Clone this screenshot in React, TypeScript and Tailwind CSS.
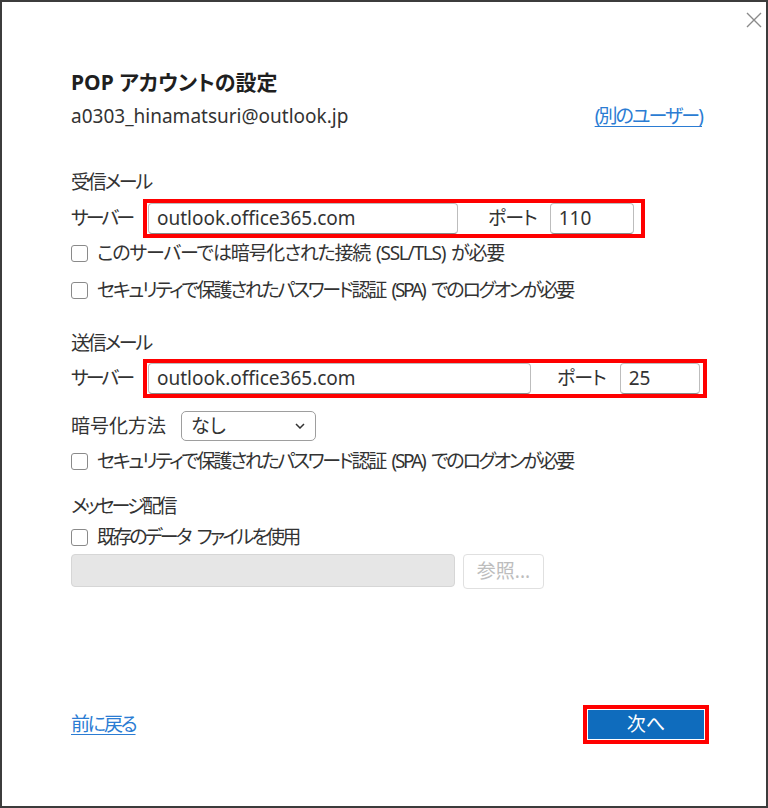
import React from "react";

function Checkbox({ label, track }: { label: string; track: string }) {
  return (
    <div className="flex items-center h-[26px]">
      <div className="w-[17px] h-[17px] border border-[#8a8a8a] rounded-[3px] bg-white shrink-0" />
      <span className={`ml-[9px] text-[19px] text-[#333333] whitespace-nowrap ${track}`}>{label}</span>
    </div>
  );
}

function ServerRow({
  boxW,
  inputW,
  labelGap,
  portX,
  portW,
  portVal,
}: {
  boxW: string;
  inputW: string;
  labelGap: string;
  portX: string;
  portW: string;
  portVal: string;
}) {
  return (
    <div className="flex items-center h-[39px]">
      <span className="w-[72px] text-[19px] tracking-[-3px] text-[#333333] whitespace-nowrap">サーバー</span>
      <div className={`flex items-center h-[39px] border-4 border-[#ff0000] pl-[1px] ${boxW}`}>
        <div className={`h-[31px] border border-[#bdbdbd] border-b-[#8a8a8a] rounded-[4px] bg-white flex items-center pl-[8px] text-[19px] text-[#333333] ${inputW}`}>
          outlook.office365.com
        </div>
        <span className={`text-[19px] tracking-[-1px] text-[#333333] whitespace-nowrap ${labelGap}`}>ポート</span>
        <div className={`h-[31px] border border-[#bdbdbd] border-b-[#8a8a8a] rounded-[4px] bg-white flex items-center pl-[8px] text-[19px] text-[#333333] ${portX} ${portW}`}>
          {portVal}
        </div>
      </div>
    </div>
  );
}

export default function App() {
  return (
    <div className="relative w-[768px] h-[808px] bg-white border-2 border-[#3c3c3c] overflow-hidden font-['Noto_Sans','Noto_Sans_CJK_JP',sans-serif] [font-feature-settings:'palt']">
      <svg className="absolute left-[743px] top-[9px]" width="18" height="18" viewBox="0 0 18 18">
        <path d="M2 2 L16 16 M16 2 L2 16" stroke="#8a8a8a" strokeWidth="1.4" fill="none" />
      </svg>
      <div className="pl-[69px] pt-[66px]">
        <div className="h-[30px] flex items-center text-[21px] font-bold text-[#1f1f1f]">POP アカウントの設定</div>
        <div className="mt-[3px] h-[30px] flex items-center justify-between w-[631px]">
          <span className="text-[19px] text-[#333333]">a0303_hinamatsuri@outlook.jp</span>
          <span className="text-[19px] tracking-[-1.9px] text-[#2b7cd3] underline underline-offset-[3px]">(別のユーザー)</span>
        </div>

        <div className="mt-[36px] h-[30px] flex items-center text-[19px] tracking-[-2.2px] text-[#333333]">受信メール</div>
        <div className="mt-[2px]">
          <ServerRow
            boxW="w-[502px]"
            inputW="w-[310px]"
            labelGap="ml-[30px]"
            portX="ml-[13px]"
            portW="w-[84px]"
            portVal="110"
          />
        </div>
        <div className="mt-[2px]">
          <Checkbox track="tracking-[-1.2px] [word-spacing:2px]" label="このサーバーでは暗号化された接続 (SSL/TLS) が必要" />
        </div>
        <div className="mt-[11px]">
          <Checkbox track="tracking-[-2.3px] [word-spacing:4px]" label="セキュリティで保護されたパスワード認証 (SPA) でのログオンが必要" />
        </div>

        <div className="mt-[25px] h-[30px] flex items-center text-[19px] tracking-[-2.2px] text-[#333333]">送信メール</div>
        <div className="mt-[1px]">
          <ServerRow
            boxW="w-[564px]"
            inputW="w-[383px]"
            labelGap="ml-[26px]"
            portX="ml-[14px]"
            portW="w-[80px]"
            portVal="25"
          />
        </div>
        <div className="mt-[13px] flex items-center h-[30px]">
          <span className="w-[110px] text-[19px] text-[#333333] whitespace-nowrap">暗号化方法</span>
          <div className="w-[135px] h-[30px] border border-[#9e9e9e] rounded-[5px] flex items-center justify-between pl-[9px] pr-[10px] text-[19px] text-[#333333]">
            <span>なし</span>
            <svg width="10" height="6" viewBox="0 0 10 6">
              <path d="M1 1 L5 5 L9 1" stroke="#333" strokeWidth="1.5" fill="none" />
            </svg>
          </div>
        </div>
        <div className="mt-[7px]">
          <Checkbox track="tracking-[-2.3px] [word-spacing:4px]" label="セキュリティで保護されたパスワード認証 (SPA) でのログオンが必要" />
        </div>

        <div className="mt-[17px] h-[30px] flex items-center text-[19px] tracking-[-3px] text-[#333333]">メッセージ配信</div>
        <div className="mt-[3px]">
          <Checkbox track="tracking-[-2.8px] [word-spacing:5px]" label="既存のデータ ファイルを使用" />
        </div>
        <div className="mt-[4px] flex items-start">
          <div className="w-[384px] h-[33px] bg-[#e6e6e6] border border-[#d6d6d6] rounded-[4px]" />
          <div className="ml-[8px] w-[81px] h-[35px] border border-[#e0e0e0] rounded-[4px] flex items-center justify-center text-[19px] text-[#bdbdbd]">
            参照...
          </div>
        </div>

        <div className="mt-[116px] flex items-center justify-between w-[638px]">
          <span className="text-[19px] tracking-[-2.2px] text-[#2b7cd3] underline underline-offset-[3px]">前に戻る</span>
          <div className="w-[126px] h-[39px] border-4 border-[#ff0000] p-[1px]">
            <div className="w-full h-full bg-[#0f6cbd] flex items-center justify-center text-[19px] text-white">次へ</div>
          </div>
        </div>
      </div>
    </div>
  );
}
